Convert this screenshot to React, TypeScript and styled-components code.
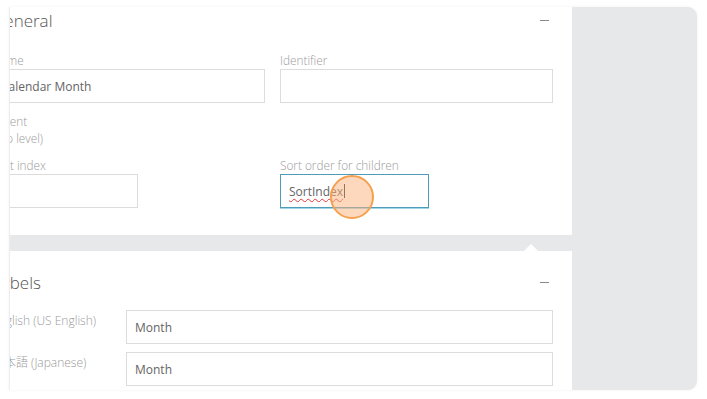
import React from 'react'
import styled, { createGlobalStyle } from 'styled-components'

const GlobalStyle = createGlobalStyle`
  html, body {
    margin: 0;
    background: #ffffff;
  }
  body {
    font-family: "Open Sans", "Noto Sans CJK JP", sans-serif;
  }
`

const Page = styled.div`
  padding: 7px 10px 9px 9px;
`

const Frame = styled.div`
  display: flex;
  height: 383px;
  overflow: hidden;
  background: #e7e8ea;
  border-left: 1px solid #ededed;
  border-radius: 0 9px 9px 0;
  box-shadow: 0 0 3px rgba(0, 0, 0, 0.06);
`

/* the editor column is scrolled sideways, so its left edge is hidden */
const Column = styled.div`
  flex: none;
  display: flex;
  flex-direction: column;
  gap: 16px;
  width: 600px;
  margin-left: -38px;
`

const Aside = styled.div`
  flex: 1;
`

const Panel = styled.section<{ $top: number; $arrow?: boolean }>`
  position: relative;
  flex: none;
  background: #ffffff;
  padding: ${({ $top }) => $top}px 19px 27px 20px;

  ${({ $arrow }) =>
    $arrow &&
    `
    &::before {
      content: '';
      position: absolute;
      top: -7px;
      left: 552px;
      border-left: 7px solid transparent;
      border-right: 7px solid transparent;
      border-bottom: 7px solid #ffffff;
    }
  `}
`

const Header = styled.div`
  display: flex;
  align-items: center;
  justify-content: space-between;
  height: 26px;
`

const Title = styled.h2`
  margin: 0;
  font-size: 17px;
  font-weight: 300;
  color: #555555;
`

const Collapse = styled.span`
  display: block;
  width: 9px;
  height: 1px;
  margin-right: 4px;
  background: #8a8a8a;
`

const Grid = styled.div<{ $mt: number }>`
  display: grid;
  grid-template-columns: 1fr 1fr;
  column-gap: 15px;
  margin-top: ${({ $mt }) => $mt}px;
`

const Field = styled.div``

const Label = styled.div`
  font-size: 11.8px;
  font-weight: 300;
  line-height: 16px;
  color: #9a9a9a;
  margin-bottom: 1px;
`

const Note = styled.div`
  font-size: 11.8px;
  font-weight: 300;
  line-height: 17px;
  color: #9a9a9a;
`

const Input = styled.div<{ $width?: number; $focus?: boolean }>`
  position: relative;
  box-sizing: border-box;
  width: ${({ $width }) => ($width ? `${$width}px` : '100%')};
  height: 34px;
  padding: 0 8px;
  display: flex;
  align-items: center;
  font-size: 12px;
  color: #646464;
  background: #ffffff;
  border: 1px solid ${({ $focus }) => ($focus ? '#4f9cb8' : '#dcdcdc')};
  box-shadow: ${({ $focus }) => ($focus ? '0 1px 0 #9fd6ea' : 'none')};
`

const Misspelled = styled.span`
  text-decoration: underline wavy #e0393e;
  text-decoration-thickness: 1px;
  text-underline-offset: 2px;
`

const Caret = styled.span`
  display: inline-block;
  width: 1px;
  height: 14px;
  margin-left: 1px;
  background: #333333;
`

const Click = styled.span`
  position: absolute;
  left: 49px;
  top: 0;
  width: 44px;
  height: 44px;
  box-sizing: border-box;
  border-radius: 50%;
  border: 2px solid #f5a04e;
  background: rgba(252, 178, 124, 0.5);
`

const LabelRow = styled.div<{ $mt: number }>`
  display: grid;
  grid-template-columns: 134px 1fr;
  margin-top: ${({ $mt }) => $mt}px;
`

const RowLabel = styled.div`
  padding-top: 3px;
  font-size: 12px;
  font-weight: 300;
  line-height: 16px;
  color: #9a9a9a;
`

const labels = [
  { lang: 'English (US English)', value: 'Month' },
  { lang: '日本語 (Japanese)', value: 'Month' },
]

export default function App() {
  return (
    <>
      <GlobalStyle />
      <Page>
        <Frame>
          <Column>
            <Panel $top={0}>
              <Header>
                <Title>General</Title>
                <Collapse />
              </Header>

              <Grid $mt={19}>
                <Field>
                  <Label>Name</Label>
                  <Input>Calendar Month</Input>
                </Field>
                <Field>
                  <Label>Identifier</Label>
                  <Input />
                </Field>
              </Grid>

              <Grid $mt={10}>
                <Field>
                  <Note>Parent</Note>
                  <Note>(top level)</Note>
                </Field>
              </Grid>

              <Grid $mt={10}>
                <Field>
                  <Label>Sort index</Label>
                  <Input $width={146} />
                </Field>
                <Field>
                  <Label>Sort order for children</Label>
                  <Input $width={149} $focus>
                    <Misspelled>SortIndex</Misspelled>
                    <Caret />
                    <Click />
                  </Input>
                </Field>
              </Grid>
            </Panel>

            <Panel $top={18} $arrow>
              <Header>
                <Title>Labels</Title>
                <Collapse />
              </Header>
              {labels.map((l, i) => (
                <LabelRow key={l.lang} $mt={i === 0 ? 15 : 8}>
                  <RowLabel>{l.lang}</RowLabel>
                  <Input>{l.value}</Input>
                </LabelRow>
              ))}
            </Panel>
          </Column>
          <Aside />
        </Frame>
      </Page>
    </>
  )
}
